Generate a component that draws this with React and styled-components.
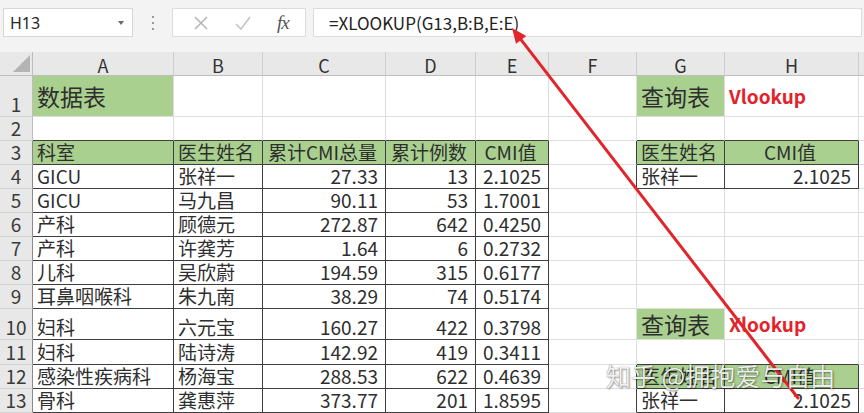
import React from "react";
import styled, { createGlobalStyle } from "styled-components";

const Global = createGlobalStyle`
  html, body { margin: 0; padding: 0; background: #fff; }
  body { overflow: hidden; }
  * { box-sizing: border-box; }
`;

const CJK = `"Noto Sans CJK SC", "Noto Sans", sans-serif`;
const GREEN = "#a9d08e";
const GRID = "#dedede";
const DARK = "#3e3e3e";

const Page = styled.div`
  position: relative;
  width: 864px;
  height: 413px;
  overflow: hidden;
  background: #fff;
  font-family: ${CJK};
`;

const Toolbar = styled.div`
  height: 52px;
  background: #f3f3f3;
  display: flex;
  align-items: flex-start;
  padding: 8px 2px 0 3px;
`;

const NameBox = styled.div`
  width: 130px;
  height: 29px;
  background: #fff;
  border: 1px solid #d6d6d6;
  display: flex;
  align-items: center;
  justify-content: space-between;
  padding: 0 8px 0 6px;
  font-family: "Noto Sans", sans-serif;
  font-size: 16px;
  color: #262626;
`;

const Caret = styled.span`
  width: 0;
  height: 0;
  border-left: 3px solid transparent;
  border-right: 3px solid transparent;
  border-top: 4px solid #6a6a6a;
`;

const Grip = styled.div`
  width: 39px;
  height: 29px;
  display: flex;
  flex-direction: column;
  align-items: center;
  justify-content: center;
  gap: 4px;
`;

const Dot = styled.span`
  width: 2px;
  height: 2px;
  background: #9a9a9a;
`;

const Buttons = styled.div`
  width: 134px;
  height: 29px;
  background: #fff;
  border: 1px solid #dcdcdc;
  display: flex;
  align-items: center;
  justify-content: space-around;
  padding: 0 4px 0 8px;
`;

const Fx = styled.span`
  font-family: "Liberation Serif", serif;
  font-style: italic;
  font-size: 19px;
  color: #555;
  letter-spacing: -1px;
`;

const Formula = styled.div`
  flex: 1;
  margin-left: 7px;
  height: 29px;
  background: #fff;
  border: 1px solid #dcdcdc;
  display: flex;
  align-items: center;
  padding-left: 15px;
  font-family: ${CJK};
  font-size: 17px;
  color: #222;
`;

const Sheet = styled.div`
  display: grid;
  grid-template-columns: 33px 141px 89px 123px 90px 73px 88px 88px 134px 1fr;
  grid-template-rows: 24px 41px 24px 24px 24px 24px 24px 24px 24px 24px 31px 25px 24px 24px 24px;
`;

const Corner = styled.div`
  background: #e8e8e8;
  border-right: 1px solid #bdbdbd;
  border-bottom: 1px solid #bdbdbd;
  display: flex;
  align-items: flex-end;
  justify-content: flex-end;
  padding: 0 2px 3px 0;
`;

const ColHead = styled.div`
  background: #e8e8e8;
  border-right: 1px solid #cdcdcd;
  border-bottom: 1px solid #bdbdbd;
  display: flex;
  align-items: center;
  justify-content: center;
  padding-top: 3px;
  font-size: 18px;
  line-height: 20px;
  color: #333;
`;

const RowHead = styled.div`
  background: #e8e8e8;
  border-right: 1px solid ${(p) => (p.$rd ? "#8a8a8a" : "#bdbdbd")};
  border-bottom: 1px solid #d2d2d2;
  display: flex;
  align-items: flex-end;
  justify-content: center;
  padding-bottom: 1px;
  font-size: 19px;
  line-height: 22px;
  color: #3a3a3a;
`;

const Cell = styled.div`
  background: ${(p) => p.$bg || "#fff"};
  border-right: 1px solid ${(p) => (p.$rd ? DARK : GRID)};
  border-bottom: 1px solid ${(p) => (p.$bd ? DARK : GRID)};
  display: flex;
  align-items: ${(p) => (p.$mid ? "center" : "flex-end")};
  justify-content: ${(p) =>
    p.$align === "right" ? "flex-end" : p.$align === "center" ? "center" : "flex-start"};
  padding: 0 7px 1px 4px;
  white-space: nowrap;
  font-size: ${(p) => (p.$big ? "23px" : "19px")};
  line-height: ${(p) => (p.$big ? "28px" : "22px")};
  font-weight: ${(p) => (p.$red ? 700 : 400)};
  color: ${(p) => (p.$red ? "#e3222b" : "#2e2e2e")};
`;

const Overlay = styled.svg`
  position: absolute;
  left: 0;
  top: 0;
  pointer-events: none;
`;

const Watermark = styled.div`
  position: absolute;
  left: 606px;
  top: 360px;
  font-family: ${CJK};
  font-size: 25px;
  line-height: 30px;
  color: rgba(255, 255, 255, 0.93);
  text-shadow: 0 0 1px rgba(0, 0, 0, 0.6), 1px 1px 2px rgba(0, 0, 0, 0.35);
  white-space: nowrap;
  pointer-events: none;
`;

const COLS = ["A", "B", "C", "D", "E", "F", "G", "H", ""];

const DATA = [
  ["GICU", "张祥一", "27.33", "13", "2.1025"],
  ["GICU", "马九昌", "90.11", "53", "1.7001"],
  ["产科", "顾德元", "272.87", "642", "0.4250"],
  ["产科", "许龚芳", "1.64", "6", "0.2732"],
  ["儿科", "吴欣蔚", "194.59", "315", "0.6177"],
  ["耳鼻咽喉科", "朱九南", "38.29", "74", "0.5174"],
  ["妇科", "六元宝", "160.27", "422", "0.3798"],
  ["妇科", "陆诗涛", "142.92", "419", "0.3411"],
  ["感染性疾病科", "杨海宝", "288.53", "622", "0.4639"],
  ["骨科", "龚惠萍", "373.77", "201", "1.8595"],
];

const cells = {};
const put = (r, c, spec) => {
  cells[`${r}-${c}`] = spec;
};
put(1, 1, { t: "数据表", bg: GREEN, big: true, mid: true });
put(1, 7, { t: "查询表", bg: GREEN, big: true, mid: true });
put(1, 8, { t: "Vlookup", red: true, mid: true });
put(3, 1, { t: "科室", bg: GREEN });
put(3, 2, { t: "医生姓名", bg: GREEN });
put(3, 3, { t: "累计CMI总量", bg: GREEN, al: "center" });
put(3, 4, { t: "累计例数", bg: GREEN, al: "center" });
put(3, 5, { t: "CMI值", bg: GREEN, al: "center" });
put(3, 7, { t: "医生姓名", bg: GREEN, al: "center" });
put(3, 8, { t: "CMI值", bg: GREEN, al: "center" });
put(4, 7, { t: "张祥一" });
put(4, 8, { t: "2.1025", al: "right" });
put(10, 7, { t: "查询表", bg: GREEN, big: true, mid: true });
put(10, 8, { t: "Xlookup", red: true, mid: true });
put(12, 7, { t: "医生姓名", bg: GREEN, al: "center" });
put(12, 8, { t: "CMI值", bg: GREEN, al: "center" });
put(13, 7, { t: "张祥一" });
put(13, 8, { t: "2.1025", al: "right" });
DATA.forEach((row, i) => {
  row.forEach((v, j) => {
    put(i + 4, j + 1, { t: v, al: j >= 2 ? "right" : "left" });
  });
});

const boxed = (r, c) =>
  (r >= 3 && r <= 13 && c >= 1 && c <= 5) ||
  ([3, 4, 12, 13].includes(r) && (c === 7 || c === 8));

const ROWS = Array.from({ length: 14 }, (_, i) => i + 1);

function Arrow() {
  const tip = [512, 28];
  const tail = [798, 398];
  const dx = tail[0] - tip[0];
  const dy = tail[1] - tip[1];
  const len = Math.hypot(dx, dy);
  const ux = dx / len;
  const uy = dy / len;
  const L = 15;
  const W = 6.5;
  const bx = tip[0] + ux * L;
  const by = tip[1] + uy * L;
  const px = -uy * W;
  const py = ux * W;
  return (
    <Overlay width="864" height="413" viewBox="0 0 864 413">
      <line x1={tail[0]} y1={tail[1]} x2={bx} y2={by} stroke="#e2252b" strokeWidth="3" strokeLinecap="round" />
      <polygon
        points={`${tip[0]},${tip[1]} ${bx + px},${by + py} ${bx - px},${by - py}`}
        fill="#e2252b"
      />
    </Overlay>
  );
}

export default function App() {
  return (
    <Page>
      <Global />
      <Toolbar>
        <NameBox>
          <span>H13</span>
          <Caret />
        </NameBox>
        <Grip>
          <Dot />
          <Dot />
          <Dot />
        </Grip>
        <Buttons>
          <svg width="16" height="16" viewBox="0 0 16 16">
            <path d="M2 2 L14 14 M14 2 L2 14" stroke="#b5b5b5" strokeWidth="1.6" fill="none" />
          </svg>
          <svg width="18" height="16" viewBox="0 0 18 16">
            <path d="M2 9 L7 14 L16 2" stroke="#c4c4c4" strokeWidth="1.6" fill="none" />
          </svg>
          <Fx>fx</Fx>
        </Buttons>
        <Formula>=XLOOKUP(G13,B:B,E:E)</Formula>
      </Toolbar>
      <Sheet>
        <Corner>
          <svg width="17" height="17" viewBox="0 0 17 17">
            <polygon points="17,0 17,17 0,17" fill="#b4b4b4" />
          </svg>
        </Corner>
        {COLS.map((c, i) => (
          <ColHead key={`h${i}`}>{c}</ColHead>
        ))}
        {ROWS.map((r) => (
          <React.Fragment key={r}>
            <RowHead $rd={boxed(r, 1)}>{r}</RowHead>
            {COLS.map((_, i) => {
              const c = i + 1;
              const s = cells[`${r}-${c}`] || {};
              return (
                <Cell
                  key={`${r}-${c}`}
                  $bg={s.bg}
                  $align={s.al}
                  $big={s.big}
                  $red={s.red}
                  $mid={s.mid}
                  $rd={boxed(r, c) || boxed(r, c + 1)}
                  $bd={boxed(r, c) || boxed(r + 1, c)}
                >
                  {s.t}
                </Cell>
              );
            })}
          </React.Fragment>
        ))}
      </Sheet>
      <Arrow />
      <Watermark>知乎 @拥抱爱与自由</Watermark>
    </Page>
  );
}
